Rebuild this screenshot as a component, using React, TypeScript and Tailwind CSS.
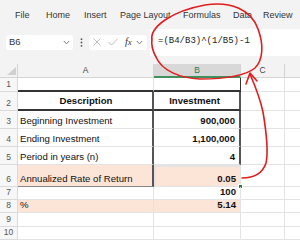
import React from "react";

function Chevron() {
  return (
    <svg width="7" height="5" viewBox="0 0 7 5" fill="none">
      <path d="M0.8 1 L3.5 3.8 L6.2 1" stroke="#666" strokeWidth="0.9" />
    </svg>
  );
}

type RowProps = {
  n: number;
  h: string;
  a?: React.ReactNode;
  b?: React.ReactNode;
  aCls?: string;
  bCls?: string;
  hdrCls?: string;
  bOverlay?: React.ReactNode;
};

function Row({ n, h, a, b, aCls = "", bCls = "", hdrCls = "", bOverlay }: RowProps) {
  return (
    <div className={`flex ${h}`}>
      <div
        className={`flex w-[18px] items-end justify-center border-r border-b border-[#dadada] bg-[#f7f7f7] pb-[1px] text-[8.5px] leading-[11px] text-[#555] ${hdrCls}`}
      >
        {n}
      </div>
      <div className={`flex w-[136px] items-end border-r border-b border-[#e3e3e3] pb-[2px] pl-[2px] text-[9.6px] leading-[11px] text-[#111] ${aCls}`}>
        {a}
      </div>
      <div className={`relative flex w-[87px] items-end justify-end border-r border-b border-[#e3e3e3] pb-[2px] pr-[4px] text-[9.6px] font-bold leading-[11px] text-[#111] ${bCls}`}>
        {b}
        {bOverlay}
      </div>
      <div className="w-[44px] border-r border-b border-[#e3e3e3]" />
      <div className="w-[15px] border-b border-[#e3e3e3]" />
    </div>
  );
}

export default function App() {
  return (
    <div className="relative h-[240px] w-[300px] overflow-hidden bg-white font-['Liberation_Sans',Arial,sans-serif]">
      {/* menu bar */}
      <div className="flex h-[27px] items-center bg-[#f3f3f3] pl-[15px] pt-[5px] text-[9px] text-[#333]">
        <span className="w-[31px]">File</span>
        <span className="w-[38px]">Home</span>
        <span className="w-[36px]">Insert</span>
        <span className="w-[63px]">Page Layout</span>
        <span className="w-[50px]">Formulas</span>
        <span className="w-[30px]">Data</span>
        <span>Review</span>
      </div>

      {/* formula bar */}
      <div className="flex h-[30px] items-center bg-[#f3f3f3] pl-[6px]">
        <div className="flex h-[15px] w-[67px] items-center justify-between rounded-[3px] bg-white pl-[3px] pr-[3px] text-[9.5px] text-[#333]">
          <span>B6</span>
          <Chevron />
        </div>
        <div className="flex w-[16px] justify-center">
          <svg width="3" height="9" viewBox="0 0 3 9">
            <circle cx="1.5" cy="1.2" r="0.9" fill="#555" />
            <circle cx="1.5" cy="4.5" r="0.9" fill="#555" />
            <circle cx="1.5" cy="7.8" r="0.9" fill="#555" />
          </svg>
        </div>
        <div className="flex h-[15px] w-[58px] items-center rounded-[3px] bg-white pl-[4px]">
          <svg width="8" height="8" viewBox="0 0 8 8" className="mr-[7px]">
            <path d="M0.5 0.5 L7.5 7.5 M7.5 0.5 L0.5 7.5" stroke="#b5b5b5" strokeWidth="0.9" />
          </svg>
          <svg width="10" height="8" viewBox="0 0 10 8" className="mr-[7px]">
            <path d="M0.5 4 L3.5 7 L9.5 0.8" stroke="#b5b5b5" strokeWidth="0.9" fill="none" />
          </svg>
          <span className="mr-[4px] font-['Liberation_Serif',serif] text-[10px] italic leading-none text-[#333]">
            f<span className="text-[9px]">x</span>
          </span>
          <Chevron />
        </div>
        <div className="ml-[3px] flex h-[27px] flex-1 items-center bg-white pl-[8px] font-['Liberation_Mono',monospace] text-[9px] text-[#222]">
          =(B4/B3)^(1/B5)-1
        </div>
      </div>
      <div className="h-[7px] bg-[#f3f3f3]" />

      {/* column headers */}
      <div className="flex h-[14px] bg-[#f3f3f3] text-[8.5px] leading-[11px] text-[#444]">
        <div className="relative w-[18px] border-r border-b border-[#d4d4d4]">
          <svg width="9" height="8" viewBox="0 0 9 8" className="absolute right-[1px] bottom-[2px]">
            <path d="M9 0 L9 8 L0 8 Z" fill="#d0d0d0" />
          </svg>
        </div>
        <div className="flex w-[136px] items-center justify-center border-r border-b border-[#d4d4d4]">A</div>
        <div className="flex w-[87px] items-center justify-center border-r border-b-2 border-r-[#d4d4d4] border-b-[#3f8f5f] bg-[#d8d8d8] text-[#2d7a4a]">
          B
        </div>
        <div className="flex w-[44px] items-center justify-center border-r border-b border-[#d4d4d4]">C</div>
        <div className="w-[15px] border-b border-[#d4d4d4]" />
      </div>

      {/* grid rows */}
      <Row n={1} h="h-[14px]" aCls="border-b-2 border-b-[#333]" bCls="border-b-2 border-b-[#333] border-r-[#333]" />
      <Row
        n={2}
        h="h-[19px]"
        a={<span className="w-full text-center font-bold">Description</span>}
        b={<span className="w-full text-center">Investment</span>}
        aCls="border-r-2 border-r-[#555] border-b-2 border-b-[#333] pb-[3px]"
        bCls="border-r-2 border-r-[#555] border-b-2 border-b-[#333] pb-[3px] pr-0"
      />
      <Row n={3} h="h-[18px]" a="Beginning Investment" b="900,000" aCls="border-r-2 border-r-[#555]" bCls="border-r-2 border-r-[#555]" />
      <Row n={4} h="h-[18px]" a="Ending Investment" b="1,100,000" aCls="border-r-2 border-r-[#555]" bCls="border-r-2 border-r-[#555]" />
      <Row n={5} h="h-[18px]" a="Period in years (n)" b="4" aCls="border-r-2 border-r-[#555]" bCls="border-r-2 border-r-[#555]" />
      <Row
        n={6}
        h="h-[22px]"
        a="Annualized Rate of Return"
        b="0.05"
        hdrCls="text-[#2d7a4a]"
        aCls="bg-[#fce4d6] border-r-2 border-r-[#555] border-b-[#888]"
        bCls="bg-[#fce4d6] border-2 border-[#4f9a6c] pr-[3px] pb-[1px]"
        bOverlay={<div className="absolute -right-[3px] -bottom-[3px] h-[5px] w-[5px] border border-white bg-[#2d7a4a]" />}
      />
      <Row n={7} h="h-[13px]" b="100" />
      <Row n={8} h="h-[13px]" a="%" b="5.14" aCls="bg-[#fce4d6]" bCls="bg-[#fce4d6]" />
      <Row n={9} h="h-[14px]" />
      <Row n={10} h="h-[13px]" />

      {/* red hand-drawn annotation */}
      <svg className="pointer-events-none absolute left-0 top-0" width="300" height="240" viewBox="0 0 300 240" fill="none">
        <path
          d="M152 41 C149 27 172 11 205 5 C230 1 251 9 258 29 C264 45 263 60 255 68 C245 76 225 79 200 79 C180 78 162 71 156 57 C152 50 151 45 152 38"
          stroke="#e11d1d"
          strokeWidth="1.6"
          strokeLinecap="round"
        />
        <path
          d="M242 178 C252 178 262 175 266 163 C269 150 266 130 263 112 C260 98 256 88 250 74"
          stroke="#e11d1d"
          strokeWidth="1.6"
          strokeLinecap="round"
        />
        <path d="M246 84 L250 73 L257 81" stroke="#e11d1d" strokeWidth="1.6" strokeLinecap="round" strokeLinejoin="round" />
      </svg>
    </div>
  );
}
